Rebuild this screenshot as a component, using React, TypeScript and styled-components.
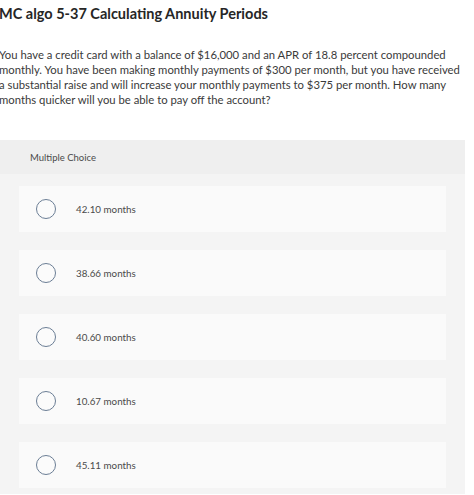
import styled, { createGlobalStyle } from 'styled-components'

const GlobalStyle = createGlobalStyle`
  body {
    margin: 0;
    background: #ffffff;
    font-family: Lato, "Open Sans", sans-serif;
  }
`

const Page = styled.div`
  width: 474px;
  height: 495px;
  overflow: hidden;
  margin-left: -1px;
`

const Title = styled.h1`
  font-family: Lato, sans-serif;
  font-weight: 700;
  font-size: 14.5px;
  color: #262626;
  margin: 0;
  padding-top: 5px;
  line-height: 18px;
`

const Question = styled.p`
  font-family: Lato, sans-serif;
  font-size: 11.3px;
  line-height: 15px;
  color: #3a3a3a;
  margin: 24px 0 0;
  width: 465px;
`

const Panel = styled.div`
  margin-top: 33px;
  width: 466px;
  background: #f4f4f4;
  padding-bottom: 6px;
`

const PanelHeader = styled.div`
  height: 34px;
  background: #efefef;
  display: flex;
  align-items: center;
  padding-left: 31px;
  font-family: Lato, sans-serif;
  font-size: 9.5px;
  color: #4a4a4a;
`

const Options = styled.div`
  display: flex;
  flex-direction: column;
  gap: 18px;
  padding: 12px 19px 0 20px;
`

const Option = styled.label`
  height: 46px;
  background: #fafafa;
  display: flex;
  align-items: center;
  padding-left: 17px;
  gap: 20px;
  cursor: pointer;
`

const Radio = styled.span`
  width: 18px;
  height: 18px;
  border-radius: 50%;
  border: 1.3px solid #6b7e95;
  background: #fbfbfb;
  flex-shrink: 0;
`

const OptionText = styled.span`
  font-family: Lato, sans-serif;
  font-size: 9.8px;
  color: #4a4a4a;
`

const choices = ['42.10 months', '38.66 months', '40.60 months', '10.67 months', '45.11 months']

export default function App() {
  return (
    <Page>
      <GlobalStyle />
      <Title>MC algo 5-37 Calculating Annuity Periods</Title>
      <Question>
        You have a credit card with a balance of $16,000 and an APR of 18.8 percent compounded
        monthly. You have been making monthly payments of $300 per month, but you have received
        a substantial raise and will increase your monthly payments to $375 per month. How many
        months quicker will you be able to pay off the account?
      </Question>
      <Panel>
        <PanelHeader>Multiple Choice</PanelHeader>
        <Options>
          {choices.map((c) => (
            <Option key={c}>
              <Radio />
              <OptionText>{c}</OptionText>
            </Option>
          ))}
        </Options>
      </Panel>
    </Page>
  )
}
